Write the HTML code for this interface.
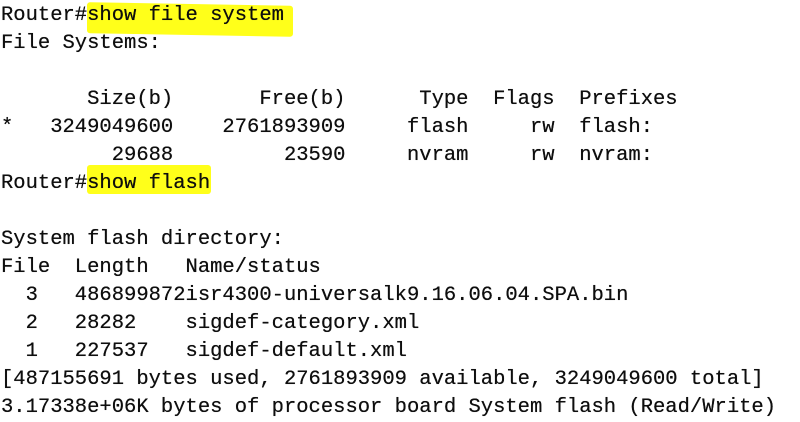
<!DOCTYPE html>
<html><head><meta charset="utf-8"><style>
html,body{margin:0;padding:0;background:#fff;width:800px;height:421px;overflow:hidden}
pre{margin:0;position:absolute;left:1px;top:2px;font-family:"Liberation Mono",monospace;font-size:20.5px;line-height:28px;color:#0e0e0e;white-space:pre;letter-spacing:0;text-shadow:0 0 0.4px #000}
.hl{position:absolute;background:#ffff1a;border-radius:3px}
</style></head><body>
<div class="hl" style="left:87px;top:4px;width:206px;height:31px;transform:skewY(1deg)"></div>
<div class="hl" style="left:87px;top:165px;width:124px;height:29px"></div>
<pre>Router#show file system
File Systems:

       Size(b)       Free(b)      Type  Flags  Prefixes
*   3249049600    2761893909     flash     rw  flash:
         29688         23590     nvram     rw  nvram:
Router#show flash

System flash directory:
File  Length   Name/status
  3   486899872isr4300-universalk9.16.06.04.SPA.bin
  2   28282    sigdef-category.xml
  1   227537   sigdef-default.xml
[487155691 bytes used, 2761893909 available, 3249049600 total]
3.17338e+06K bytes of processor board System flash (Read/Write)</pre>
</body></html>
